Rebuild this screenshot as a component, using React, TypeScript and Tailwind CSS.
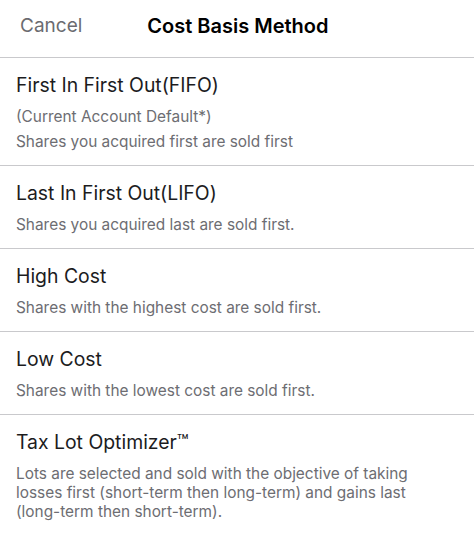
import React from 'react';

type Method = {
  title: string;
  lines: string[];
};

const methods: Method[] = [
  {
    title: 'First In First Out(FIFO)',
    lines: ['(Current Account Default*)', 'Shares you acquired first are sold first'],
  },
  { title: 'Last In First Out(LIFO)', lines: ['Shares you acquired last are sold first.'] },
  { title: 'High Cost', lines: ['Shares with the highest cost are sold first.'] },
  { title: 'Low Cost', lines: ['Shares with the lowest cost are sold first.'] },
  {
    title: 'Tax Lot Optimizer™',
    lines: [
      'Lots are selected and sold with the objective of taking losses first (short-term then long-term) and gains last (long-term then short-term).',
    ],
  },
];

export default function App() {
  return (
    <div className="w-[474px] h-[535px] overflow-hidden bg-white font-['Inter',sans-serif] text-[#1c1c1e]">
      {/* Header */}
      <header className="h-[58px] flex items-center pb-[6px] border-b border-[#c9c9cc]">
        <button className="pl-[20px] text-[19px] leading-[24px] text-[#6b6b70]">Cancel</button>
        <h1 className="ml-[65px] text-[20px] leading-[24px] font-semibold text-black">Cost Basis Method</h1>
      </header>

      {/* Options */}
      <ul>
        {methods.map((m) => (
          <MethodRow key={m.title} method={m} />
        ))}
      </ul>
    </div>
  );
}

function MethodRow({ method }: { method: Method }) {
  return (
    <li className="border-b border-[#c9c9cc] pl-[16px] pr-[20px] pt-[15px] pb-[14px]">
      <div className="text-[19.4px] leading-[24px]">{method.title}</div>
      <div className="mt-[10px] flex flex-col gap-[6px]">
        {method.lines.map((l) => (
          <p key={l} className="text-[15.4px] leading-[19px] text-[#6d6d72] max-w-[405px]">
            {l}
          </p>
        ))}
      </div>
    </li>
  );
}
